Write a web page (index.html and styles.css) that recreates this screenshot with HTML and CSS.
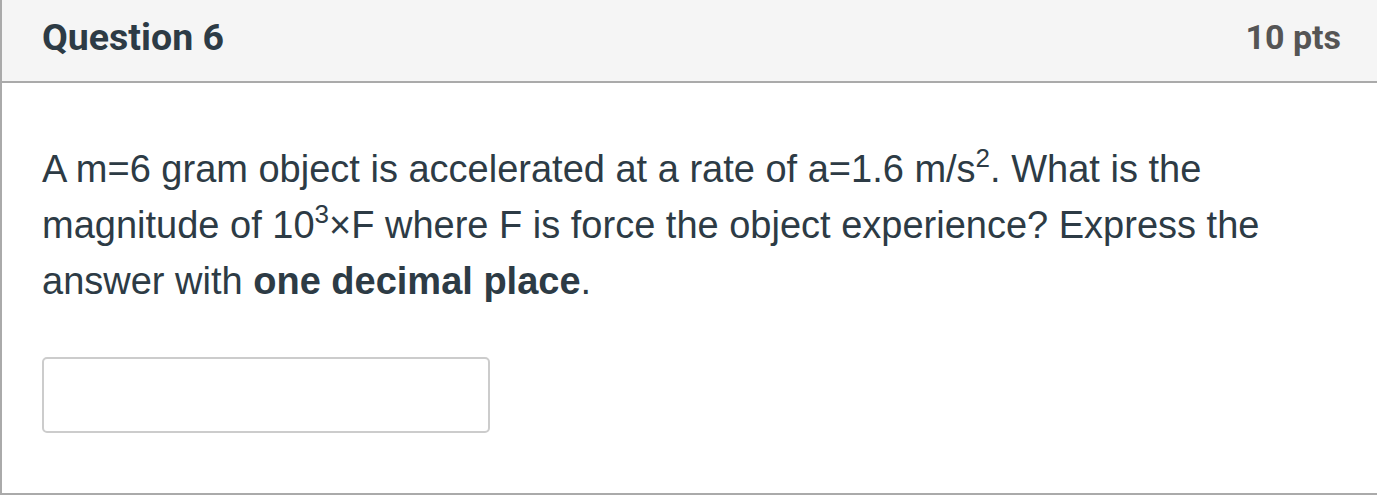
FILE: index.html
```html
<!DOCTYPE html>
<html>
<head>
<meta charset="utf-8">
<link rel="stylesheet" href="styles.css">
</head>
<body>
<div class="question">
  <div class="header">
    <span class="title">Question 6</span>
    <span class="pts">10 pts</span>
  </div>
  <div class="content">
    <p class="text">A m=6 gram object is accelerated at a rate of a=1.6 m/s<sup>2</sup>. What is the magnitude of 10<sup>3</sup>×F where F is force the object experience? Express the answer with <strong>one decimal place</strong>.</p>
    <input class="answer" type="text">
  </div>
</div>
</body>
</html>
```
FILE: styles.css
```css
html, body {
  margin: 0;
  padding: 0;
  background: #ffffff;
}
.question {
  width: 1377px;
  height: 495px;
  box-sizing: border-box;
  border-left: 2px solid #aaaaaa;
  border-bottom: 2px solid #aaaaaa;
  display: flex;
  flex-direction: column;
}
.header {
  height: 83px;
  box-sizing: border-box;
  background: #f5f5f5;
  border-bottom: 2px solid #aaaaaa;
  display: flex;
  align-items: center;
  justify-content: space-between;
  padding: 0 36px 8px 40px;
  font-family: Roboto, "Liberation Sans", sans-serif;
  font-weight: 700;
}
.title {
  font-size: 37.5px;
  color: #2d3b45;
}
.pts {
  font-size: 34px;
  color: #555555;
}
.content {
  padding: 0 30px 0 40px;
}
.text {
  margin: 58px 0 0 0;
  font-family: "Liberation Sans", Arial, sans-serif;
  font-size: 38px;
  line-height: 56px;
  color: #2d3b45;
}
.text sup {
  font-size: 26px;
  line-height: 0;
  vertical-align: 15px;
}
.text strong {
  font-weight: 700;
}
.answer {
  display: block;
  margin-top: 48px;
  width: 448px;
  height: 76px;
  box-sizing: border-box;
  border: 2px solid #cccccc;
  border-radius: 5px;
  background: #ffffff;
  outline: none;
}
```
